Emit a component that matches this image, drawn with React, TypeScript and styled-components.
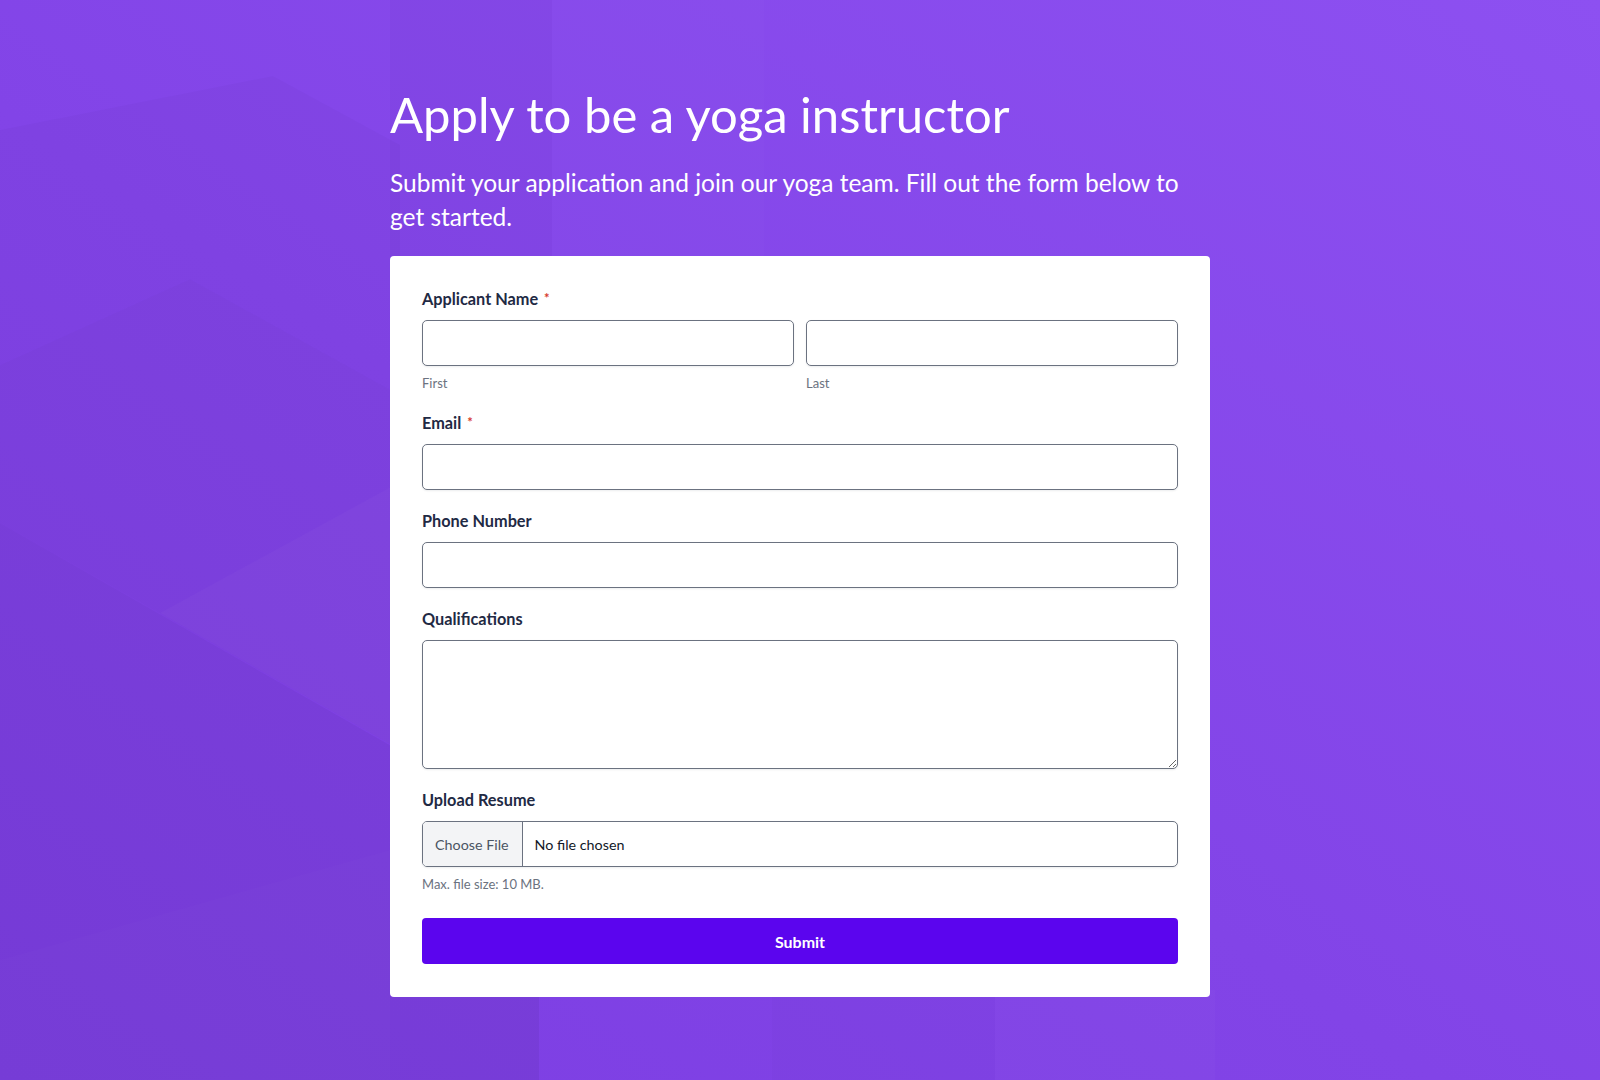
import styled, { createGlobalStyle } from 'styled-components'

const backdropSvg = `<svg xmlns="http://www.w3.org/2000/svg" viewBox="0 0 1600 1080" preserveAspectRatio="none">
<defs>
<linearGradient id="g" x1="0" y1="1" x2="1" y2="0">
<stop offset="0" stop-color="#7c3ee2"/>
<stop offset="0.45" stop-color="#8244e7"/>
<stop offset="1" stop-color="#8d50f1"/>
</linearGradient>
</defs>
<rect width="1600" height="1080" fill="url(#g)"/>
<polygon points="0,130 273,76 400,145 400,395 190,279 0,365" fill="#000" fill-opacity="0.02"/>
<polygon points="0,365 190,279 400,395 400,750 0,523" fill="#000" fill-opacity="0.035"/>
<polygon points="0,523 539,830 539,1080 0,1080" fill="#000" fill-opacity="0.05"/>
<polygon points="160,613 400,482 400,750" fill="#fff" fill-opacity="0.025"/>
<polygon points="0,960 390,850 390,1080 0,1080" fill="#fff" fill-opacity="0.012"/>
<rect x="390" y="0" width="162" height="260" fill="#000" fill-opacity="0.02"/>
<rect x="552" y="0" width="212" height="260" fill="#fff" fill-opacity="0.015"/>
<rect x="772" y="990" width="223" height="90" fill="#000" fill-opacity="0.01"/>
<rect x="995" y="990" width="220" height="90" fill="#fff" fill-opacity="0.02"/>
</svg>`

const GlobalStyle = createGlobalStyle`
  * {
    box-sizing: border-box;
  }

  body {
    margin: 0;
    font-family: Lato, "Noto Sans", sans-serif;
    color: #1f2a44;
  }
`

const Page = styled.main`
  min-height: 1080px;
  padding: 85px 0 60px;
  background-color: #8044e6;
  background-image: url("data:image/svg+xml,${encodeURIComponent(backdropSvg)}");
  background-size: 100% 100%;
`

const Column = styled.div`
  width: 820px;
  margin: 0 auto;
`

const Title = styled.h1`
  margin: 0;
  font-size: 49px;
  line-height: 58px;
  font-weight: 400;
  color: #fff;
`

const Intro = styled.p`
  margin: 23px 0 22px;
  font-size: 24.5px;
  line-height: 34px;
  font-weight: 400;
  color: #fff;
`

const Card = styled.form`
  display: flex;
  flex-direction: column;
  gap: 20px;
  padding: 32px 32px 33px;
  background: #fff;
  border-radius: 4px;
`

const Field = styled.div`
  display: flex;
  flex-direction: column;
`

const Label = styled.label`
  display: block;
  margin-bottom: 10px;
  font-size: 16.3px;
  line-height: 22px;
  font-weight: 700;
  color: #1f2a44;
`

const Required = styled.span`
  margin-left: 6px;
  font-size: 13px;
  line-height: 16px;
  color: #d6392b;
  vertical-align: top;
  position: relative;
  top: 2px;
`

const NameRow = styled.div`
  display: grid;
  grid-template-columns: 1fr 1fr;
  gap: 12px;
`

const SubField = styled.div`
  display: flex;
  flex-direction: column;
`

const Hint = styled.span`
  margin-top: 8px;
  font-size: 13px;
  line-height: 18px;
  color: #6b7280;
`

const TextInput = styled.input`
  width: 100%;
  height: 46px;
  padding: 0 12px;
  border: 1px solid #6b7280;
  border-radius: 5px;
  box-shadow: 0 1px 2px rgba(17, 24, 39, 0.08);
  font-family: inherit;
  font-size: 15px;
  color: #1f2a44;
  background: #fff;
  outline: none;
`

const TextArea = styled.textarea`
  width: 100%;
  height: 129px;
  padding: 10px 12px;
  border: 1px solid #6b7280;
  border-radius: 5px;
  box-shadow: 0 1px 2px rgba(17, 24, 39, 0.08);
  font-family: inherit;
  font-size: 15px;
  resize: vertical;
  outline: none;
  display: block;
`

const FileBox = styled.label`
  display: flex;
  align-items: stretch;
  height: 46px;
  border: 1px solid #6b7280;
  border-radius: 5px;
  box-shadow: 0 1px 2px rgba(17, 24, 39, 0.08);
  overflow: hidden;
  cursor: pointer;

  input {
    display: none;
  }
`

const FileButton = styled.span`
  display: flex;
  align-items: center;
  padding: 0 13px 0 12px;
  background: #f3f4f6;
  border-right: 1px solid #6b7280;
  font-size: 14.3px;
  color: #4b5563;
`

const FileName = styled.span`
  display: flex;
  align-items: center;
  padding: 1px 12px 0;
  font-size: 14.3px;
  color: #111827;
`

const SubmitButton = styled.button`
  height: 46px;
  margin-top: 5px;
  border: none;
  border-radius: 4px;
  background: #5b05ee;
  color: #fff;
  font-family: inherit;
  font-size: 16px;
  font-weight: 700;
  cursor: pointer;
`

export default function App() {
  return (
    <Page>
      <GlobalStyle />
      <Column>
        <Title>Apply to be a yoga instructor</Title>
        <Intro>
          Submit your application and join our yoga team. Fill out the form below to get started.
        </Intro>

        <Card onSubmit={(e) => e.preventDefault()}>
          <Field>
            <Label htmlFor="first-name">
              Applicant Name<Required>*</Required>
            </Label>
            <NameRow>
              <SubField>
                <TextInput id="first-name" type="text" />
                <Hint>First</Hint>
              </SubField>
              <SubField>
                <TextInput id="last-name" type="text" />
                <Hint>Last</Hint>
              </SubField>
            </NameRow>
          </Field>

          <Field>
            <Label htmlFor="email">
              Email<Required>*</Required>
            </Label>
            <TextInput id="email" type="email" />
          </Field>

          <Field>
            <Label htmlFor="phone">Phone Number</Label>
            <TextInput id="phone" type="tel" />
          </Field>

          <Field>
            <Label htmlFor="qualifications">Qualifications</Label>
            <TextArea id="qualifications" />
          </Field>

          <Field>
            <Label as="span">Upload Resume</Label>
            <FileBox>
              <input type="file" />
              <FileButton>Choose File</FileButton>
              <FileName>No file chosen</FileName>
            </FileBox>
            <Hint>Max. file size: 10 MB.</Hint>
          </Field>

          <SubmitButton type="submit">Submit</SubmitButton>
        </Card>
      </Column>
    </Page>
  )
}
